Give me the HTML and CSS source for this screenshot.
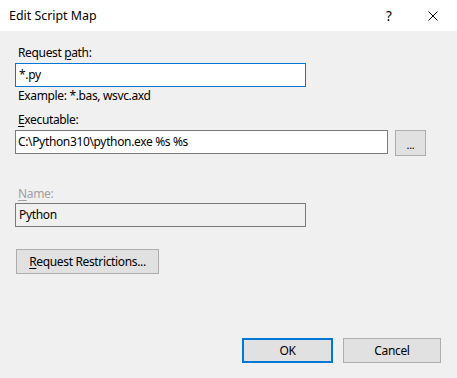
FILE: index.html
```html
<!DOCTYPE html>
<html>
<head>
<meta charset="utf-8">
<link rel="stylesheet" href="styles.css">
</head>
<body>
<div class="window">
  <div class="titlebar">
    <span class="title">Edit Script Map</span>
    <span class="help">?</span>
    <span class="close">
      <svg width="10" height="10" viewBox="0 0 10 10"><path d="M0.5 0.5 L9.5 9.5 M9.5 0.5 L0.5 9.5" stroke="#000" stroke-width="1" fill="none"/></svg>
    </span>
  </div>
  <div class="body">
    <div class="lbl lbl-first">Request <u>p</u>ath:</div>
    <div class="field field-focus field-short">*.py</div>
    <div class="hint">Example: *.bas, wsvc.axd</div>
    <div class="lbl lbl-exec"><u>E</u>xecutable:</div>
    <div class="row">
      <div class="field field-long">C:\Python310\python.exe %s %s</div>
      <div class="btn btn-browse">...</div>
    </div>
    <div class="lbl lbl-disabled"><u>N</u>ame:</div>
    <div class="field field-ro field-short">Python</div>
    <div class="btn btn-restrict"><u>R</u>equest Restrictions...</div>
    <div class="footer">
      <div class="btn btn-ok">OK</div>
      <div class="btn btn-cancel">Cancel</div>
    </div>
  </div>
</div>
</body>
</html>
```

FILE: styles.css
```css
* { box-sizing: border-box; }
html, body { margin: 0; padding: 0; }
body {
  font-family: "Noto Sans", "Open Sans", sans-serif;
  font-size: 12px;
  letter-spacing: -0.35px;
  color: #000;
  background: #f0f0f0;
}
.window {
  width: 457px;
  height: 378px;
  background: #f0f0f0;
  display: flex;
  flex-direction: column;
}
.titlebar {
  height: 31px;
  background: #fff;
  display: flex;
  align-items: center;
  padding-left: 9px;
}
.title {
  flex: 1;
  line-height: 31px;
  font-size: 12.4px;
  letter-spacing: 0;
}
.help {
  width: 10px;
  margin-right: 32px;
  font-size: 13.5px;
}
.close {
  width: 10px;
  height: 10px;
  margin-right: 19px;
  display: flex;
}
.body {
  flex: 1;
  display: flex;
  flex-direction: column;
  padding: 14px 16px 0 15px;
}
.lbl, .hint {
  line-height: 15px;
  padding-left: 3px;
}
.lbl-exec { margin-top: 9px; }
.lbl-disabled { color: #a0a0a0; margin-top: 30px; }
.field {
  height: 24px;
  border: 1px solid #7a7a7a;
  background: #fff;
  line-height: 22px;
  padding-left: 3px;
  white-space: nowrap;
  margin-top: 3px;
}
.field-short { width: 291px; }
.field-focus { border-color: #0078d7; }
.field-ro { background: #f0f0f0; margin-top: 2px; }
.hint { margin-top: 1px; }
.row {
  display: flex;
  gap: 7px;
  margin-top: 1px;
}
.field-long { width: 373px; margin-top: 2px; height: 24px; padding-left: 2px; }
.btn {
  background: #e1e1e1;
  border: 1px solid #adadad;
  display: flex;
  align-items: center;
  justify-content: center;
}
.btn-browse {
  width: 31px;
  height: 26px;
  margin-top: 2px;
  font-size: 11px;
  padding-top: 2px;
}
.btn-restrict {
  width: 143px;
  height: 25px;
  margin-top: 22px;
  margin-left: 1px;
}
.footer {
  display: flex;
  justify-content: flex-end;
  gap: 10px;
  margin-top: 64px;
}
.btn-ok {
  width: 91px;
  height: 25px;
  border: 2px solid #0078d7;
}
.btn-cancel {
  width: 98px;
  height: 25px;
}
u { text-decoration: underline; text-underline-offset: 2px; }
```
